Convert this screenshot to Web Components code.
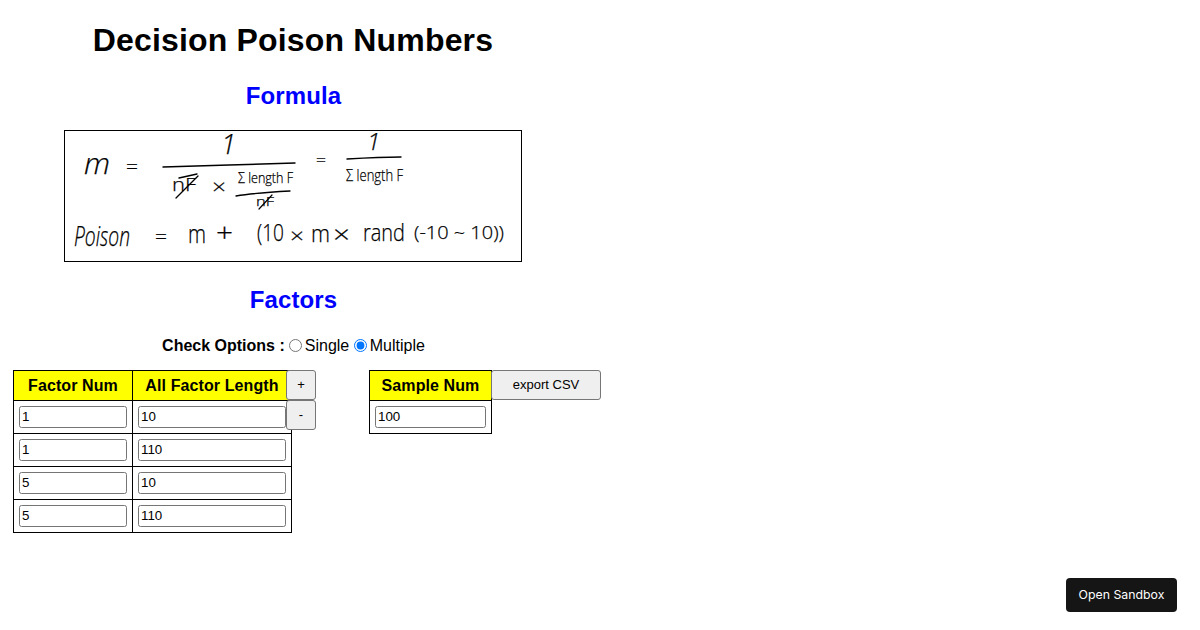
<!DOCTYPE html>
<html lang="en"><head><meta charset="utf-8"><title>Decision Poison Numbers</title>
<style>
html,body{background:#fff}
body{margin:8px;font-family:"Liberation Sans",Arial,sans-serif;font-size:16px;color:#000}
</style></head><body>
<poison-app></poison-app>
<open-sandbox>Open Sandbox</open-sandbox>
<script>
function def(name,html){
  customElements.define(name,class extends HTMLElement{
    constructor(){super();const r=this.attachShadow({mode:'open'});r.innerHTML=typeof html==='function'?html(this):html;}
  });
}
def('formula-figure',`<style>:host{display:block;width:458px;height:132px;margin:0 auto;box-sizing:border-box;border:1px solid #000;background:#fff}
svg{display:block;width:456px;height:130px;overflow:visible}
text{font-family:"Open Sans","Liberation Sans",sans-serif;font-weight:300;fill:#000;stroke:#000;stroke-width:.25}
.i{font-style:italic}
line,path{stroke:#000;fill:none;stroke-linecap:round}</style>
<svg viewBox="1 1 456 130" xmlns="http://www.w3.org/2000/svg">
<text class="i" x="20" y="44" font-size="29" textLength="26" lengthAdjust="spacingAndGlyphs">m</text>
<text x="62" y="43" font-size="19" textLength="12" lengthAdjust="spacingAndGlyphs">=</text>
<text class="i" x="157" y="24" font-size="27">1</text>
<path d="M99 37 C140 36 190 34 231 33" stroke-width="1.4"/>
<text x="108" y="61" font-size="18" textLength="24" lengthAdjust="spacingAndGlyphs">nF</text>
<path d="M112 68 L134 46 M115 48 L133 44" stroke-width="1.3"/>
<text x="148" y="64" font-size="20" textLength="14" lengthAdjust="spacingAndGlyphs">×</text>
<text x="174" y="53" font-size="14" textLength="55" lengthAdjust="spacingAndGlyphs">Σ length F</text>
<path d="M172 66 C190 63 208 62 226 61" stroke-width="1.3"/>
<text x="192" y="76" font-size="13" textLength="18" lengthAdjust="spacingAndGlyphs">nF</text>
<path d="M195 79 L208 65" stroke-width="1.2"/>
<text x="252" y="36" font-size="17" textLength="10" lengthAdjust="spacingAndGlyphs">=</text>
<text class="i" x="303" y="20" font-size="24">1</text>
<path d="M283 29 C300 28 320 27 337 27" stroke-width="1.4"/>
<text x="282" y="51" font-size="16" textLength="57" lengthAdjust="spacingAndGlyphs">Σ length F</text>
<text class="i" x="10" y="116" font-size="27" textLength="56" lengthAdjust="spacingAndGlyphs">Poison</text>
<text x="91" y="113" font-size="19" textLength="12" lengthAdjust="spacingAndGlyphs">=</text>
<text x="124" y="113" font-size="25" textLength="18" lengthAdjust="spacingAndGlyphs">m</text>
<text x="152" y="112" font-size="25" textLength="17" lengthAdjust="spacingAndGlyphs">+</text>
<text x="193" y="111" font-size="23" textLength="27" lengthAdjust="spacingAndGlyphs">(10</text>
<text x="226" y="113" font-size="21" textLength="14" lengthAdjust="spacingAndGlyphs">×</text>
<text x="247" y="112" font-size="23" textLength="19" lengthAdjust="spacingAndGlyphs">m</text>
<text x="269" y="113" font-size="23" textLength="17" lengthAdjust="spacingAndGlyphs">×</text>
<text x="299" y="111" font-size="23" textLength="42" lengthAdjust="spacingAndGlyphs">rand</text>
<text x="350" y="109" font-size="19" textLength="90" lengthAdjust="spacingAndGlyphs">(-10 ~ 10))</text>
</svg>`);
def('options-row',`<style>:host{display:flex;justify-content:center;align-items:center;height:20px;white-space:nowrap;padding-left:1px}
b{margin-right:4px}
label{display:inline-flex;align-items:center}
input{margin:0 3px 0 0;width:13px;height:13px;position:relative;top:-1px}
label+label{margin-left:4.5px}</style>
<b>Check Options :</b>
<label><input type="radio" name="m">Single</label>
<label><input type="radio" name="m" checked>Multiple</label>`);
def('num-cell',t=>`<style>:host{display:block}
input{display:block;box-sizing:border-box;width:${t.getAttribute('w')}px;height:22px;margin:0;padding:0 2px 2px;border:1px solid #767676;border-radius:2.5px;font:13.333px "Liberation Sans",Arial,sans-serif;color:#000;background:#fff}</style>
<input type="text" value="${t.getAttribute('v')}">`);
def('ui-btn',t=>`<style>:host{display:block}
button{display:block;box-sizing:border-box;width:${t.getAttribute('w')}px;height:30px;margin:0;padding:0 6px 2px;border:1px solid #767676;border-radius:3px;background:#efefef;color:#000;font:13px "Liberation Sans",Arial,sans-serif}</style>
<button><slot></slot></button>`);
const tableCss=`<style>:host{display:block;flex:none}
table{border-collapse:collapse;table-layout:fixed}
th,td{border:1px solid #000;padding:5px;box-sizing:border-box}
th{background:#ff0;font-size:16px;font-weight:700;height:30px;padding:0;line-height:18px;text-align:center;letter-spacing:.1px}
td{height:33px}</style>`;
def('factor-table',tableCss+`<table style="width:279px"><colgroup><col style="width:119px"><col style="width:159px"></colgroup>
<tr><th>Factor Num</th><th>All Factor Length</th></tr>
<tr><td><num-cell w="108" v="1"></num-cell></td><td><num-cell w="148" v="10"></num-cell></td></tr>
<tr><td><num-cell w="108" v="1"></num-cell></td><td><num-cell w="148" v="110"></num-cell></td></tr>
<tr><td><num-cell w="108" v="5"></num-cell></td><td><num-cell w="148" v="10"></num-cell></td></tr>
<tr><td><num-cell w="108" v="5"></num-cell></td><td><num-cell w="148" v="110"></num-cell></td></tr></table>`);
def('sample-table',tableCss+`<table style="width:123px"><tr><th>Sample Num</th></tr>
<tr><td><num-cell w="111" v="100"></num-cell></td></tr></table>`);
def('poison-app',`<style>:host{display:block;width:570px}
h1,h2{margin:0;text-align:center;font-weight:700}
h1{font-size:32px;padding-top:14px;line-height:37px;letter-spacing:.17px}
h2{color:#00f;font-size:24px;line-height:28px;letter-spacing:.1px;padding-left:1px}
.f1{margin-top:23px}
formula-figure{margin-top:20px}
.f2{margin-top:24px}
options-row{margin-top:22px}
.tables{display:flex;align-items:flex-start;padding-left:5px;margin-top:14px}
.btns{flex:none;margin-left:-6px;position:relative}
.sample{margin-left:53px}
</style>
<h1>Decision Poison Numbers</h1>
<h2 class="f1">Formula</h2>
<formula-figure></formula-figure>
<h2 class="f2">Factors</h2>
<options-row></options-row>
<div class="tables">
<factor-table></factor-table>
<div class="btns"><ui-btn w="30">+</ui-btn><ui-btn w="30">-</ui-btn></div>
<sample-table class="sample"></sample-table>
<ui-btn w="110" style="margin-left:-1px;position:relative">export CSV</ui-btn>
</div>`);
def('open-sandbox',`<style>:host{position:fixed;right:23px;bottom:18px;display:flex;align-items:center;justify-content:center;box-sizing:border-box;width:111px;height:34px;padding-bottom:1px;background:#151515;border-radius:4px;color:#fff;font:12.3px Inter,"Liberation Sans",sans-serif}</style><slot></slot>`);
</script></body></html>
